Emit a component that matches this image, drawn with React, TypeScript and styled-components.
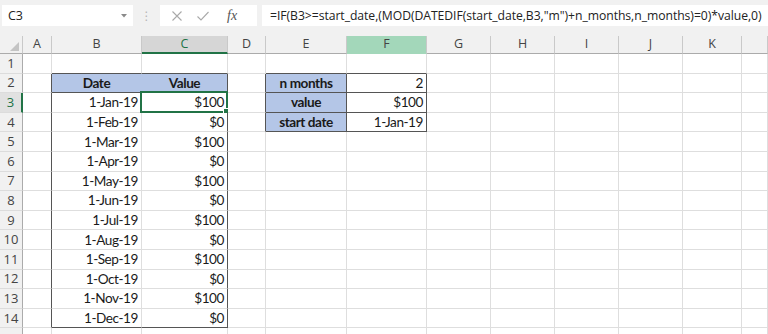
import React from "react";
import styled, { createGlobalStyle } from "styled-components";

const Global = createGlobalStyle`
  html, body { margin: 0; padding: 0; background: #ffffff; }
  body { width: 768px; height: 334px; overflow: hidden; }
  #root { width: 768px; height: 334px; overflow: hidden; }
`;

const Page = styled.div`
  width: 768px;
  height: 334px;
  display: flex;
  flex-direction: column;
  background: #f1f1f1;
  overflow: hidden;
`;

const Toolbar = styled.div`
  height: 36px;
  flex: none;
  display: flex;
  align-items: flex-start;
  padding: 5px 0 0 2px;
  box-sizing: border-box;
  background: #f1f1f1;
`;

const NameBox = styled.div`
  width: 131px;
  height: 21px;
  background: #fff;
  display: flex;
  align-items: center;
  justify-content: space-between;
  padding: 0 6px 0 6px;
  box-sizing: border-box;
  font-family: "Open Sans", "Liberation Sans", sans-serif;
  font-size: 12.5px;
  color: #222;
`;

const Dots = styled.div`
  width: 27px;
  height: 21px;
  display: flex;
  align-items: center;
  justify-content: center;
  color: #b5b5b5;
  font-family: "DejaVu Sans", sans-serif;
  font-size: 12px;
`;

const IconBox = styled.div`
  width: 97px;
  height: 21px;
  background: #fff;
  display: flex;
  align-items: center;
  box-sizing: border-box;
  padding-left: 11px;
  gap: 13px;
  color: #a6a6a6;
`;

const Fx = styled.span`
  font-family: "Liberation Serif", serif;
  font-style: italic;
  font-size: 14px;
  color: #555;
  margin-left: 4px;
`;

const FormulaBox = styled.div`
  flex: 1;
  height: 21px;
  margin-left: 5px;
  background: #fff;
  display: flex;
  align-items: center;
  padding-left: 8px;
  box-sizing: border-box;
  white-space: nowrap;
  overflow: hidden;
  font-family: "Open Sans", "Liberation Sans", sans-serif;
  font-size: 12.2px;
  letter-spacing: -0.05px;
  color: #222;
`;

const COL_W = [23, 29, 90, 86, 38, 81, 80, 64, 64, 64, 64, 59, 26];
const LETTERS = ["", "A", "B", "C", "D", "E", "F", "G", "H", "I", "J", "K", ""];

const Grid = styled.div`
  display: grid;
  grid-template-columns: ${COL_W.map((w) => w + "px").join(" ")};
  grid-template-rows: 18px repeat(15, 19.6px);
  background: #fff;
  flex: none;
`;

const ColHead = styled.div<{ $bg: string; $color: string; $bb: string; $bbw: number }>`
  background: ${(p) => p.$bg};
  color: ${(p) => p.$color};
  border-right: 1px solid #c9c9c9;
  border-bottom: ${(p) => p.$bbw}px solid ${(p) => p.$bb};
  box-sizing: border-box;
  display: flex;
  align-items: center;
  justify-content: center;
  font-family: "Open Sans", "Liberation Sans", sans-serif;
  font-size: 12.5px;
  line-height: 1;
`;

const Corner = styled.div`
  background: #f1f1f1;
  border-right: 1px solid #c9c9c9;
  border-bottom: 1px solid #ababab;
  box-sizing: border-box;
  display: flex;
  align-items: flex-end;
  justify-content: flex-end;
  padding: 0 3px 2px 0;
`;

const RowHead = styled.div<{ $active: boolean }>`
  background: ${(p) => (p.$active ? "#e1e1e1" : "#f1f1f1")};
  color: ${(p) => (p.$active ? "#217346" : "#444")};
  border-right: ${(p) => (p.$active ? "2px solid #217346" : "1px solid #ababab")};
  border-bottom: 1px solid #dcdcdc;
  box-sizing: border-box;
  display: flex;
  align-items: center;
  justify-content: center;
  font-family: "Open Sans", "Liberation Sans", sans-serif;
  font-size: 13px;
  line-height: 1;
`;

const Cell = styled.div<{
  $rb: string;
  $bb: string;
  $bg: string;
  $align: string;
  $bold: boolean;
}>`
  position: relative;
  background: ${(p) => p.$bg};
  border-right: 1px solid ${(p) => p.$rb};
  border-bottom: 1px solid ${(p) => p.$bb};
  box-sizing: border-box;
  display: flex;
  align-items: center;
  justify-content: ${(p) => p.$align};
  padding: 0 3px;
  font-family: Lato, "Liberation Sans", sans-serif;
  font-size: 13.6px;
  letter-spacing: -0.45px;
  font-weight: ${(p) => (p.$bold ? 700 : 400)};
  color: #1a1a1a;
  white-space: nowrap;
`;

const Selection = styled.div`
  position: absolute;
  left: -2px;
  top: -2px;
  right: -1px;
  bottom: -1px;
  border: 2px solid #217346;
  pointer-events: none;
`;

const Handle = styled.div`
  position: absolute;
  right: -4px;
  bottom: -4px;
  width: 5px;
  height: 5px;
  background: #217346;
  border: 1px solid #fff;
`;

const GRID = "#dedede";
const DARK = "#555555";
const BLUE = "#b4c6e7";

const months = ["Jan", "Feb", "Mar", "Apr", "May", "Jun", "Jul", "Aug", "Sep", "Oct", "Nov", "Dec"];

type CellDef = { text?: string; align?: string; bold?: boolean; bg?: string };

function content(r: number, c: number): CellDef {
  if (r === 2) {
    if (c === 2) return { text: "Date", align: "center", bold: true, bg: BLUE };
    if (c === 3) return { text: "Value", align: "center", bold: true, bg: BLUE };
  }
  if (r >= 3 && r <= 14) {
    const i = r - 3;
    if (c === 2) return { text: `1-${months[i]}-19`, align: "flex-end" };
    if (c === 3) return { text: i % 2 === 0 ? "$100" : "$0", align: "flex-end" };
  }
  if (c === 5) {
    if (r === 2) return { text: "n months", align: "center", bold: true, bg: BLUE };
    if (r === 3) return { text: "value", align: "center", bold: true, bg: BLUE };
    if (r === 4) return { text: "start date", align: "center", bold: true, bg: BLUE };
  }
  if (c === 6) {
    if (r === 2) return { text: "2", align: "flex-end" };
    if (r === 3) return { text: "$100", align: "flex-end" };
    if (r === 4) return { text: "1-Jan-19", align: "flex-end" };
  }
  return {};
}

function borders(r: number, c: number): { rb: string; bb: string } {
  let rb = GRID;
  let bb = GRID;
  if (r >= 2 && r <= 14) {
    if (c === 1 || c === 3) rb = DARK;
    if (r === 2 && c === 2) rb = BLUE;
  }
  if ((c === 2 || c === 3) && (r === 1 || r === 2 || r === 14)) bb = DARK;
  if (r >= 2 && r <= 4 && (c === 4 || c === 5 || c === 6)) rb = DARK;
  if ((c === 5 || c === 6) && r >= 1 && r <= 4) bb = DARK;
  return { rb, bb };
}

const XIcon = () => (
  <svg width="12" height="12" viewBox="0 0 12 12">
    <path d="M1.5 1.5 L10.5 10.5 M10.5 1.5 L1.5 10.5" stroke="#a9a9a9" strokeWidth="1.1" fill="none" />
  </svg>
);

const CheckIcon = () => (
  <svg width="14" height="12" viewBox="0 0 14 12">
    <path d="M1.5 6.5 L5 10 L12.5 2" stroke="#a9a9a9" strokeWidth="1.1" fill="none" />
  </svg>
);

const Caret = () => (
  <svg width="6" height="4" viewBox="0 0 6 4">
    <path d="M0 0 L6 0 L3 3.5 Z" fill="#8a8a8a" />
  </svg>
);

const CornerTri = () => (
  <svg width="9" height="9" viewBox="0 0 9 9">
    <path d="M9 0 L9 9 L0 9 Z" fill="#c4c4c4" />
  </svg>
);

export default function App() {
  const rows = Array.from({ length: 15 }, (_, i) => i + 1);
  const cols = Array.from({ length: 12 }, (_, i) => i + 1);
  return (
    <>
      <Global />
      <Page>
        <Toolbar>
          <NameBox>
            <span>C3</span>
            <Caret />
          </NameBox>
          <Dots>⋮</Dots>
          <IconBox>
            <XIcon />
            <CheckIcon />
            <Fx>fx</Fx>
          </IconBox>
          <FormulaBox>
            {'=IF(B3>=start_date,(MOD(DATEDIF(start_date,B3,"m")+n_months,n_months)=0)*value,0)'}
          </FormulaBox>
        </Toolbar>
        <Grid>
          <Corner>
            <CornerTri />
          </Corner>
          {LETTERS.slice(1).map((l, i) => {
            const c = i + 1;
            const isC = c === 3;
            const isF = c === 6;
            return (
              <ColHead
                key={"h" + c}
                $bg={isC ? "#d6d6d6" : isF ? "#a3d7ba" : "#f1f1f1"}
                $color={isC ? "#217346" : "#444"}
                $bb={isC ? "#217346" : isF ? "#a3d7ba" : "#ababab"}
                $bbw={isC ? 2 : 1}
              >
                {l}
              </ColHead>
            );
          })}
          {rows.map((r) => (
            <React.Fragment key={"r" + r}>
              <RowHead $active={r === 3}>{r <= 14 ? r : ""}</RowHead>
              {cols.map((c) => {
                const d = content(r, c);
                const b = borders(r, c);
                return (
                  <Cell
                    key={r + "-" + c}
                    $rb={b.rb}
                    $bb={b.bb}
                    $bg={d.bg ?? "#fff"}
                    $align={d.align ?? "flex-start"}
                    $bold={!!d.bold}
                  >
                    {d.text}
                    {r === 3 && c === 3 && (
                      <Selection>
                        <Handle />
                      </Selection>
                    )}
                  </Cell>
                );
              })}
            </React.Fragment>
          ))}
        </Grid>
      </Page>
    </>
  );
}
